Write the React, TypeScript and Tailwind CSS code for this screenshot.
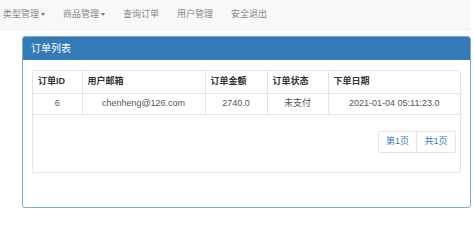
import React from "react";

const font = { fontFamily: '"Liberation Sans", "Noto Sans CJK SC", sans-serif' };

function Caret() {
  return (
    <span className="inline-block ml-[2px] align-middle w-0 h-0 border-l-[2.5px] border-r-[2.5px] border-t-[3px] border-l-transparent border-r-transparent border-t-[#777]" />
  );
}

export default function App() {
  const th = "border-r border-[#e3e3e3] px-[5px] text-left font-bold text-[#333] align-middle";
  const td = "border-r border-[#e3e3e3] px-[5px] text-center text-[#555] align-middle";
  return (
    <div className="w-[474px] h-[211px] bg-white overflow-hidden text-[9px]" style={font}>
      <div className="w-[470px] h-[30px] bg-[#f8f8f8] border-b border-[#ececec] flex items-center gap-[18px] pl-[3px] text-[#888]">
        <span className="flex items-center">类型管理<Caret /></span>
        <span className="flex items-center">商品管理<Caret /></span>
        <span>查询订单</span>
        <span>用户管理</span>
        <span>安全退出</span>
      </div>
      <div className="ml-[22px] mt-[6px] w-[449px] h-[172px] border border-[#7fa8d2] rounded-[3px] overflow-hidden">
        <div className="h-[24px] bg-[#337ab7] text-white text-[10px] flex items-center pl-[9px] -mt-px -mx-px">
          订单列表
        </div>
        <div className="px-[9px] pt-[10px]">
          <div className="w-[429px] h-[103px] border border-[#e3e3e3] rounded-[2px]">
            <table className="w-full border-collapse table-fixed">
              <colgroup>
                <col className="w-[49px]" />
                <col className="w-[123px]" />
                <col className="w-[62px]" />
                <col className="w-[61px]" />
                <col className="w-[132px]" />
              </colgroup>
              <thead>
                <tr className="h-[22px] border-b border-[#e3e3e3]">
                  <th className={th}>订单ID</th>
                  <th className={th}>用户邮箱</th>
                  <th className={th}>订单金额</th>
                  <th className={th}>订单状态</th>
                  <th className={th + " border-r-0"}>下单日期</th>
                </tr>
              </thead>
              <tbody>
                <tr className="h-[21px] border-b border-[#e3e3e3]">
                  <td className={td}>6</td>
                  <td className={td}>chenheng@126.com</td>
                  <td className={td}>2740.0</td>
                  <td className={td}>未支付</td>
                  <td className={td + " border-r-0"}>2021-01-04 05:11:23.0</td>
                </tr>
              </tbody>
            </table>
            <div className="flex justify-end pr-[4px] mt-[16px]">
              <div className="flex border border-[#e3e3e3] rounded-[2px] text-[#337ab7]">
                <span className="w-[38px] h-[20px] flex items-center justify-center border-r border-[#e3e3e3]">第1页</span>
                <span className="w-[38px] h-[20px] flex items-center justify-center">共1页</span>
              </div>
            </div>
          </div>
        </div>
      </div>
    </div>
  );
}
